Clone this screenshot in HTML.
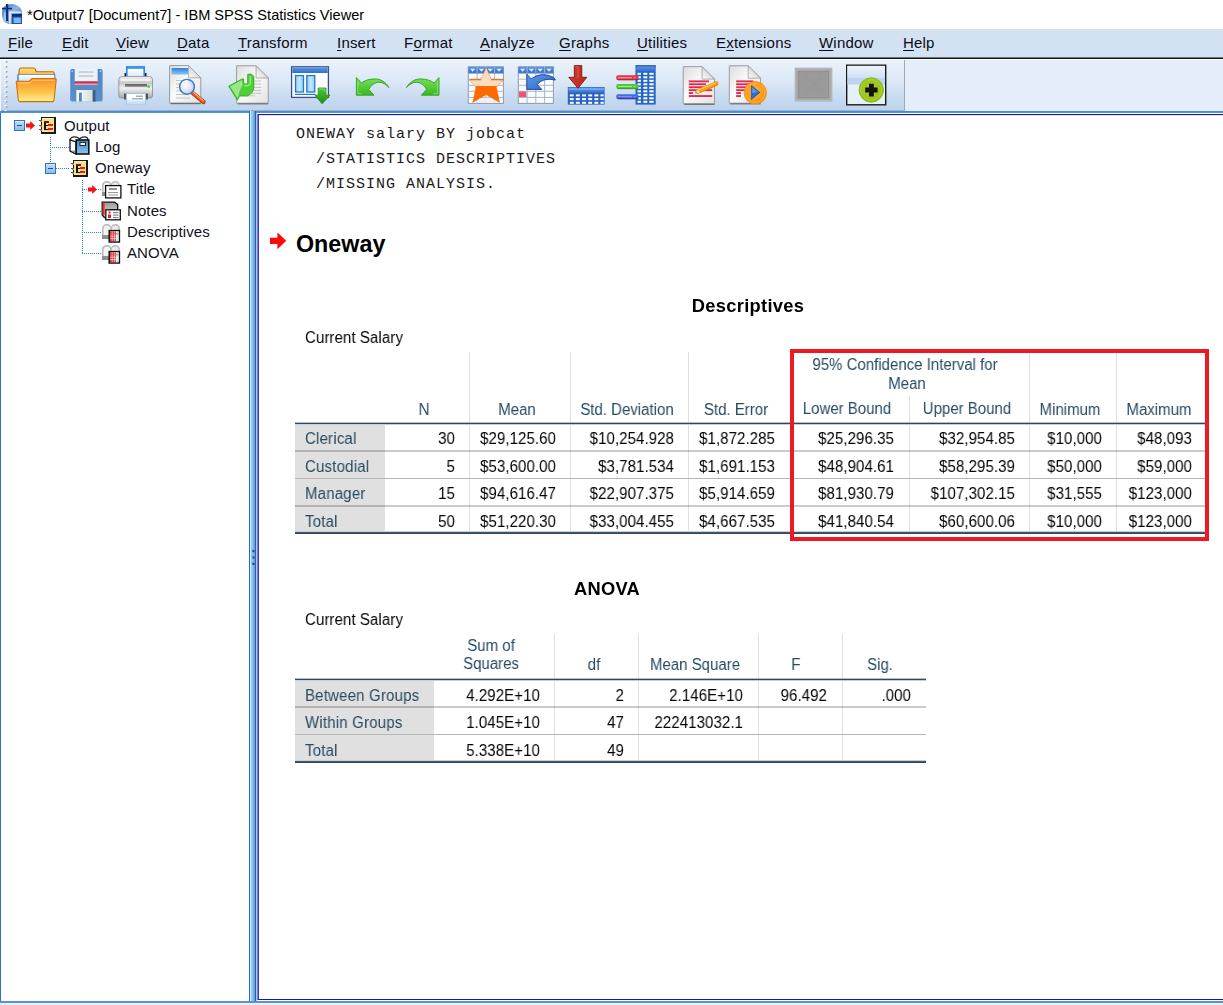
<!DOCTYPE html>
<html>
<head>
<meta charset="utf-8">
<title>Output7 - IBM SPSS Statistics Viewer</title>
<style>
*{box-sizing:border-box;margin:0;padding:0}
html,body{width:1223px;height:1005px;overflow:hidden;background:#fff}
body{position:relative;font-family:"Liberation Sans",sans-serif;color:#000}
.abs{position:absolute}
.ttl,.cap,.h,.l,.d{will-change:transform}
/* title bar */
#titlebar{left:0;top:0;width:1223px;height:29px;background:#fff}
#titletext{left:27px;top:6px;font-size:14.6px;line-height:18px;white-space:nowrap;color:#000}
/* menu */
#menubar{left:0;top:29px;width:1223px;height:28px;background:#d3e2f3}
#menuline{left:0;top:57px;width:1223px;height:3px;background:linear-gradient(#66717d 0,#66717d 1px,#121416 1px,#121416 2px,#fbfdff 2px,#fbfdff 3px)}
.mi{top:34px;font-size:15px;line-height:18px;white-space:nowrap;color:#0a0a14;letter-spacing:.2px}
.mi u{text-decoration:underline;text-underline-offset:2px}
/* toolbar */
#toolbar{left:0;top:60px;width:905px;height:51px;background:linear-gradient(#eaf2fb 0%,#dde9f7 40%,#c7daf0 75%,#bdd3ec 100%)}
#toolbar2{left:905px;top:60px;width:318px;height:51px;background:#e4eefa}
#tbsep{left:904px;top:60px;width:1px;height:51px;background:#a2a9b1}
#tbbot{left:0;top:110px;width:905px;height:1px;background:#9fb0c4}
#tbbot2{left:0;top:111px;width:1223px;height:2px;background:linear-gradient(#4489cf,#5596d6)}
/* panes */
#leftpane{left:0;top:113px;width:249px;height:888px;background:#fff;border-left:1px solid #2a74c4}
#split{left:249px;top:111px;width:7px;height:891px;background:linear-gradient(90deg,#1e6fbe 0,#1e6fbe 1px,#c4f0fb 1px,#c4f0fb 2px,#9dcbf9 2px,#8fc0f3 4px,#6f9fc8 5px,#6f9fc8 6px,#1768b8 6px,#1768b8 7px)}
#rightpane{left:256px;top:113px;width:967px;height:888px;background:#fff;border-left:1px solid #a8c8ee}
#rp-in{left:257px;top:114px;width:966px;height:886px;border:1px solid #1a10b8;border-right:none;border-left:2px solid #3f39c9;background:#fff}
#rp-fade{left:259px;top:115px;width:964px;height:1px;background:#e6e3f8}
#rp-l{left:257px;top:114px;width:1px;height:886px;background:#7c79da}
#botline{left:0;top:1001px;width:1223px;height:2px;background:#5594d3}
#botline2{left:0;top:1003px;width:1223px;height:2px;background:linear-gradient(#f4f8fd,#dde8f4)}
/* tree */
.tt{font-size:15px;line-height:18px;white-space:nowrap;color:#10101c;letter-spacing:.1px}
/* content */
.syn{font-family:"Liberation Mono",monospace;font-size:15px;letter-spacing:1px;line-height:20px;white-space:pre;color:#1a1a1a;left:296px}
#h1{left:296px;top:230px;font-size:23.3px;font-weight:bold;line-height:28px;white-space:nowrap}
.ttl{font-weight:bold;font-size:18.3px;line-height:22px;white-space:nowrap;text-align:center;letter-spacing:.3px}
.cap{font-size:16px;line-height:18px;white-space:nowrap;color:#010205;letter-spacing:.1px;transform:scaleX(.9375);transform-origin:0 50%}
.h{font-size:16px;line-height:18px;white-space:nowrap;color:#264a60;text-align:center;letter-spacing:0;transform:scaleX(.9375);transform-origin:50% 50%}
.l{font-size:16px;line-height:18px;white-space:nowrap;color:#264a60;letter-spacing:.2px;transform:scaleX(.9375);transform-origin:0 50%}
.d{font-size:16px;line-height:18px;white-space:nowrap;color:#010205;text-align:right;letter-spacing:.1px;transform:scaleX(.9375);transform-origin:100% 50%}
.vl{width:1px;background:#e0e0e0}
.hl{height:1px;background:#b6b6b6}
.hl2{height:2px;background:#cbcbcb;mix-blend-mode:multiply}
.dk{height:3px;background:linear-gradient(#b4bec6 0,#b4bec6 1px,#33475a 1px,#33475a 2px,#c9ced2 2px,#c9ced2 3px)}
.dk2{height:3px;background:linear-gradient(#c9ced2 0,#c9ced2 1px,#44586a 1px,#44586a 2px,#33475a 2px,#33475a 3px)}
.lb{background:#e0e0e0}
</style>
</head>
<body>
<!-- TITLE BAR -->
<div id="titlebar" class="abs"></div>
<svg class="abs" style="left:1px;top:3px" width="22" height="22" viewBox="0 0 22 22">
<defs><linearGradient id="ai1" x1="0" y1="0" x2="1" y2="1"><stop offset="0" stop-color="#3f74bc"/><stop offset=".45" stop-color="#8fb6e2"/><stop offset="1" stop-color="#356fc0"/></linearGradient></defs>
<path d="M1 9C1 4 5 1 10.5 1S21 4.5 21 10V21H9C4 21 1 17 1 12z" fill="url(#ai1)"/>
<path d="M8 8.5H20V10H9.8V20.5H8z" fill="#eef5fc" opacity=".85"/><path d="M4 9.5V18" stroke="#dbe8f6" stroke-width="1" opacity=".7"/>
<rect x="5" y="1" width="2.2" height="17" fill="#0d2f86"/>
<rect x="1" y="4.8" width="10" height="1.6" fill="#0d2f86"/>
<rect x="11" y="11" width="10" height="10" fill="#1f55b0"/>
<rect x="11" y="11" width="10" height="2.6" fill="#0b2e8a"/>
<rect x="12.6" y="14.6" width="7.2" height="5.4" fill="#7db8f2"/>
</svg>
<div id="titletext" class="abs">*Output7 [Document7] - IBM SPSS Statistics Viewer</div>
<!-- MENU -->
<div id="menubar" class="abs"></div>
<div id="menuline" class="abs"></div>
<div class="abs mi" style="left:8px"><u>F</u>ile</div>
<div class="abs mi" style="left:62px"><u>E</u>dit</div>
<div class="abs mi" style="left:116px"><u>V</u>iew</div>
<div class="abs mi" style="left:177px"><u>D</u>ata</div>
<div class="abs mi" style="left:238px"><u>T</u>ransform</div>
<div class="abs mi" style="left:337px"><u>I</u>nsert</div>
<div class="abs mi" style="left:404px">F<u>o</u>rmat</div>
<div class="abs mi" style="left:480px"><u>A</u>nalyze</div>
<div class="abs mi" style="left:559px"><u>G</u>raphs</div>
<div class="abs mi" style="left:637px"><u>U</u>tilities</div>
<div class="abs mi" style="left:716px">E<u>x</u>tensions</div>
<div class="abs mi" style="left:819px"><u>W</u>indow</div>
<div class="abs mi" style="left:903px"><u>H</u>elp</div>
<!-- TOOLBAR -->
<div id="toolbar" class="abs"></div>
<div id="toolbar2" class="abs"></div>
<div id="tbsep" class="abs"></div>
<div id="tbbot" class="abs"></div>
<div id="tbbot2" class="abs"></div>
<svg class="abs" style="left:0;top:59px" width="1223" height="52" viewBox="0 59 1223 52">
<defs>
<linearGradient id="gFoldB" x1="0" y1="0" x2="0" y2="1"><stop offset="0" stop-color="#ffe37a"/><stop offset="1" stop-color="#f6a11c"/></linearGradient>
<linearGradient id="gFoldF" x1="0" y1="0" x2="0" y2="1"><stop offset="0" stop-color="#f98f1a"/><stop offset=".35" stop-color="#ffad3d"/><stop offset=".6" stop-color="#ffc64a"/><stop offset="1" stop-color="#fff09a"/></linearGradient>
<linearGradient id="gPaperB" x1="0" y1="0" x2="0" y2="1"><stop offset="0" stop-color="#fff"/><stop offset="1" stop-color="#bfe2fa"/></linearGradient>
<linearGradient id="gFlop" x1="0" y1="0" x2="0" y2="1"><stop offset="0" stop-color="#4e88c6"/><stop offset="1" stop-color="#5a90c8"/></linearGradient>
<linearGradient id="gShut" x1="0" y1="0" x2="1" y2="0"><stop offset="0" stop-color="#fff"/><stop offset="1" stop-color="#cfd3d8"/></linearGradient>
<linearGradient id="gPrn" x1="0" y1="0" x2="0" y2="1"><stop offset="0" stop-color="#f3f3f3"/><stop offset=".3" stop-color="#c8c8c8"/><stop offset=".55" stop-color="#efefef"/><stop offset="1" stop-color="#a9a9a9"/></linearGradient>
<linearGradient id="gBlueHdr" x1="0" y1="0" x2="0" y2="1"><stop offset="0" stop-color="#2f80db"/><stop offset="1" stop-color="#86c8f5"/></linearGradient>
<linearGradient id="gDoc" x1="0" y1="0" x2="1" y2="1"><stop offset="0" stop-color="#dcdcdc"/><stop offset=".45" stop-color="#fbfbfb"/><stop offset="1" stop-color="#e2e2e2"/></linearGradient>
<linearGradient id="gFoldc" x1="0" y1="1" x2="1" y2="0"><stop offset="0" stop-color="#fdfdfd"/><stop offset="1" stop-color="#bdbdbd"/></linearGradient>
<radialGradient id="gLens" cx=".4" cy=".4" r=".7"><stop offset="0" stop-color="#fff"/><stop offset="1" stop-color="#c3c9ea"/></radialGradient>
<linearGradient id="gGreen" x1="0" y1="0" x2="0" y2="1"><stop offset="0" stop-color="#7be05a"/><stop offset="1" stop-color="#36b91f"/></linearGradient>
<linearGradient id="gGreenD" x1="0" y1="0" x2="0" y2="1"><stop offset="0" stop-color="#4ec43a"/><stop offset="1" stop-color="#1f8f12"/></linearGradient>
<linearGradient id="gPil" x1="0" y1="0" x2="1" y2="0"><stop offset="0" stop-color="#8fcdf2"/><stop offset=".5" stop-color="#c5e8fa"/><stop offset="1" stop-color="#8fcdf2"/></linearGradient>
<linearGradient id="gTblHdr" x1="0" y1="0" x2="0" y2="1"><stop offset="0" stop-color="#5b95e0"/><stop offset="1" stop-color="#2f6fd0"/></linearGradient>
<linearGradient id="gBArrow" x1="0" y1="0" x2="1" y2="1"><stop offset="0" stop-color="#5a9cec"/><stop offset="1" stop-color="#2a64c0"/></linearGradient>
<linearGradient id="gRed" x1="0" y1="0" x2="1" y2="0"><stop offset="0" stop-color="#d43a2c"/><stop offset="1" stop-color="#b8261c"/></linearGradient>
<radialGradient id="gOrb" cx=".45" cy=".45" r=".6"><stop offset="0" stop-color="#ffb440"/><stop offset=".8" stop-color="#ff9414"/><stop offset="1" stop-color="#f08a10"/></radialGradient>
<radialGradient id="gPlus" cx=".5" cy=".45" r=".6"><stop offset="0" stop-color="#a6cc2a"/><stop offset=".75" stop-color="#9cc41c"/><stop offset="1" stop-color="#7fb010"/></radialGradient>
</defs>
<rect x="4.6" y="60" width="2" height="2" fill="#fff"/><rect x="5.7" y="60.9" width="1.7" height="1.7" fill="#93a1b3"/>
<rect x="4.6" y="65" width="2" height="2" fill="#fff"/><rect x="5.7" y="65.9" width="1.7" height="1.7" fill="#93a1b3"/>
<rect x="4.6" y="70" width="2" height="2" fill="#fff"/><rect x="5.7" y="70.9" width="1.7" height="1.7" fill="#93a1b3"/>
<rect x="4.6" y="75" width="2" height="2" fill="#fff"/><rect x="5.7" y="75.9" width="1.7" height="1.7" fill="#93a1b3"/>
<rect x="4.6" y="80" width="2" height="2" fill="#fff"/><rect x="5.7" y="80.9" width="1.7" height="1.7" fill="#93a1b3"/>
<rect x="4.6" y="85" width="2" height="2" fill="#fff"/><rect x="5.7" y="85.9" width="1.7" height="1.7" fill="#93a1b3"/>
<rect x="4.6" y="90" width="2" height="2" fill="#fff"/><rect x="5.7" y="90.9" width="1.7" height="1.7" fill="#93a1b3"/>
<rect x="4.6" y="95" width="2" height="2" fill="#fff"/><rect x="5.7" y="95.9" width="1.7" height="1.7" fill="#93a1b3"/>
<rect x="4.6" y="100" width="2" height="2" fill="#fff"/><rect x="5.7" y="100.9" width="1.7" height="1.7" fill="#93a1b3"/>
<rect x="4.6" y="105" width="2" height="2" fill="#fff"/><rect x="5.7" y="105.9" width="1.7" height="1.7" fill="#93a1b3"/>
<rect x="4.6" y="110" width="2" height="2" fill="#fff"/><rect x="5.7" y="110.9" width="1.7" height="1.7" fill="#93a1b3"/>
<rect x="0" y="59" width="1" height="52" fill="#f4f8fd"/>
<g>
<path d="M18.7 76 L19.3 69.5 Q19.6 68 21 68 H33.5 Q34.8 68 35.3 69.2 L36.2 71.7 H52.8 Q54.2 71.7 54.2 73 V80 H18.7z" fill="url(#gFoldB)" stroke="#c2650f" stroke-width="1.1"/>
<path d="M17.3 74.4 H55.3 V82 H17.3z" fill="#2b6fe0"/>
<path d="M18.6 75 H54.3 V82 H18.6z" fill="url(#gPaperB)"/>
<path d="M16.6 81.2 H29.5 L32 78.6 H55 Q56.4 78.6 56.2 80 L54 100.2 Q53.8 101.6 52.4 101.6 H20 Q18.6 101.6 18.4 100.2 L16.3 82.4 Q16.2 81.2 16.6 81.2z" fill="url(#gFoldF)" stroke="#d0700f" stroke-width="1.1"/>
<path d="M18 83 H30 L32.5 80.2 H54.6" fill="none" stroke="#ffd9a0" stroke-width="1" opacity=".8"/>
</g>
<g>
<path d="M72.2 69 H100.6 Q102.6 69 102.6 71 V99.6 Q102.6 101.6 100.6 101.6 H72.2 Q70.2 101.6 70.2 99.6 V71 Q70.2 69 72.2 69z" fill="url(#gFlop)"/>
<rect x="74.7" y="68.8" width="22.9" height="13" fill="#eef3fa"/>
<rect x="78.5" y="71.4" width="15" height="1.3" fill="#b9c0c9"/>
<rect x="78.5" y="75.4" width="15" height="1.3" fill="#b9c0c9"/>
<rect x="74.7" y="81.3" width="22.9" height="2.2" fill="#d9284a"/>
<rect x="74.7" y="83.5" width="22.9" height="1.6" fill="#f09aa8"/>
<rect x="76.4" y="90" width="19.4" height="11.6" fill="url(#gShut)"/>
<rect x="79" y="92.6" width="2.8" height="9" fill="#4e88c6"/>
<rect x="92.6" y="90" width="3.2" height="11.6" fill="#3a5f8c"/>
<rect x="71.5" y="70.5" width="1.6" height="1.6" fill="#c8dcf0" opacity=".8"/><rect x="99.6" y="70.5" width="1.6" height="1.6" fill="#c8dcf0" opacity=".8"/>
</g>
<g>
<rect x="124.5" y="73" width="22" height="5" fill="#222"/>
<rect x="126" y="66.1" width="19" height="13.5" fill="#2f86e0"/>
<rect x="127.6" y="69" width="15.8" height="11" fill="url(#gPaperB)"/>
<rect x="127.6" y="67.4" width="15.8" height="1.6" fill="#5aa6ee"/>
<path d="M122 76.6 H149.5 Q152.5 76.6 152.5 79.6 V95.5 Q152.5 98 150 98 H121.3 Q118.8 98 118.8 95.5 V79.6 Q118.8 76.6 122 76.6z" fill="url(#gPrn)" stroke="#8a8a8a" stroke-width=".8"/>
<rect x="121" y="79" width="29.5" height="2" fill="#f7f7f7" opacity=".8"/>
<rect x="125" y="84" width="22" height="2.6" fill="#6e6e6e"/>
<rect x="147.4" y="85.3" width="2.4" height="2.4" fill="#3fd04a"/>
<rect x="124" y="93.5" width="24" height="6" fill="#555"/>
<rect x="126.4" y="93.5" width="19" height="10.4" fill="#fff" stroke="#9cc4ea" stroke-width="1"/>
<rect x="126.9" y="100.5" width="18" height="3" fill="#cfe4f7"/>
<rect x="136" y="95.6" width="7" height="1.2" fill="#8d99a8"/>
<rect x="132" y="98.2" width="11" height="1.2" fill="#8d99a8"/>
</g>
<g><path d="M169.6 65.6 H188.60000000000002 L200.8 77.8 V103 H169.6z" fill="url(#gDoc)" stroke="#9b9b9b" stroke-width="1"/><path d="M188.60000000000002 65.6 L200.8 77.8 H188.60000000000002z" fill="url(#gFoldc)" stroke="#9a9a9a" stroke-width=".8"/><path d="M170.6 103.6 H200.8" stroke="#6f6f6f" stroke-width="1.2"/>
<rect x="171.6" y="68" width="16.4" height="6.6" fill="url(#gBlueHdr)"/>
<g stroke="#c4c4c4" stroke-width="1"><path d="M176 80.5h10M176 84h8M176 87.5h8M176 91h8M176 94.5h10M176 98h14"/></g>
<path d="M192.8 93.2 L203.6 102" stroke="#b33a16" stroke-width="4.2" stroke-linecap="round"/>
<path d="M193.2 93 L203.4 101.4" stroke="#f0642c" stroke-width="2.6" stroke-linecap="round"/>
<path d="M193.6 92.4 L203 100.2" stroke="#ffc9a0" stroke-width=".9" stroke-linecap="round"/>
<circle cx="187" cy="86.8" r="7.4" fill="url(#gLens)" stroke="#3b7dc7" stroke-width="1.5"/>
<path d="M182 84.5 A5.4 5.4 0 0 1 188 81.2" stroke="#fff" stroke-width="1.6" fill="none" opacity=".9"/>
</g>
<g><path d="M236.6 65.8 H256.1 L268.3 78.0 V103.2 H236.6z" fill="url(#gDoc)" stroke="#9b9b9b" stroke-width="1"/><path d="M256.1 65.8 L268.3 78.0 H256.1z" fill="url(#gFoldc)" stroke="#9a9a9a" stroke-width=".8"/><path d="M237.6 103.8 H268.3" stroke="#6f6f6f" stroke-width="1.2"/>
<g stroke="#c2c2c2" stroke-width="1"><path d="M250 81h11M250 84h11M250 87.4h11M250 90.4h11M250 93.3h11M246 95.8h9"/></g>
<path d="M247.7 74.3 L251 74.1 L253.8 76.3 L253.8 87 Q253.5 93.4 247.3 96 L239.4 96 L237.4 100.2 L228.7 86.2 L241.9 79 L243.7 79 L243.7 83.2 Q245.6 85 247.7 83.2z" fill="#4fcf3a" stroke="#2eaa22" stroke-width=".9" stroke-linejoin="round"/>
<path d="M230.2 86.4 L241.6 80.2 L242.6 84.6 L240 90 L237.6 98.2z" fill="#a9ec98" opacity=".85"/>
<path d="M244.4 85.4 Q248 87 250.2 84 L250.2 76" fill="none" stroke="#b9f2a6" stroke-width="1.2" opacity=".8"/>
</g>
<g>
<rect x="291.6" y="66.8" width="36.8" height="30.6" fill="#fff" stroke="#3d4f86" stroke-width="1.3"/>
<rect x="292.3" y="67.4" width="35.4" height="5.6" fill="url(#gTblHdr)"/>
<rect x="295.5" y="75.6" width="8" height="16.4" fill="url(#gPil)" stroke="#1f78d8" stroke-width="1.3"/>
<rect x="306.8" y="75.6" width="8" height="16.4" fill="url(#gPil)" stroke="#1f78d8" stroke-width="1.3"/>
<rect x="295" y="93.8" width="20.4" height="1.2" fill="#1f78d8"/>
<path d="M318.2 88 H326 V95.2 H330 L322.1 103.8 L314.9 95.2 H318.2z" fill="url(#gGreenD)" stroke="#1d8a12" stroke-width=".8"/>
<path d="M319.3 89 H324.8 V92" fill="none" stroke="#8fe07a" stroke-width="1" opacity=".9"/>
</g>
<g transform="translate(356.2 77.6)"><path d="M0.2 0 L0.2 17.6 L17.8 17.6 L12.6 11.8 C14.5 7.8 19 4.6 23 4.6 C27 4.6 30 7.2 32.8 9.9 C29.5 4.6 24.5 1.3 19 1.3 C13 1.3 8 3 5.2 5.4z" fill="url(#gGreen)" stroke="#2f9e1e" stroke-width=".9" stroke-linejoin="round"/><path d="M1.6 4 L1.6 16.2 L6 16.2" fill="none" stroke="#9cec80" stroke-width="1" opacity=".7"/></g>
<g transform="translate(439.2 77.6) scale(-1 1)"><path d="M0.2 0 L0.2 17.6 L17.8 17.6 L12.6 11.8 C14.5 7.8 19 4.6 23 4.6 C27 4.6 30 7.2 32.8 9.9 C29.5 4.6 24.5 1.3 19 1.3 C13 1.3 8 3 5.2 5.4z" fill="url(#gGreen)" stroke="#2f9e1e" stroke-width=".9" stroke-linejoin="round"/><path d="M1.6 4 L1.6 16.2 L6 16.2" fill="none" stroke="#9cec80" stroke-width="1" opacity=".7"/></g>
<g><rect x="468.3" y="66.8" width="35.099999999999966" height="36.60000000000001" fill="#fbfcfe" stroke="#8a9ab0" stroke-width="1"/><rect x="468.3" y="66.8" width="35.099999999999966" height="6.4" fill="url(#gTblHdr)"/><path d="M470.0875 68.8 h5.2 l-2.6 3z" fill="#fff" opacity=".85"/><path d="M478.86249999999995 68.8 h5.2 l-2.6 3z" fill="#fff" opacity=".85"/><path d="M487.6375 68.8 h5.2 l-2.6 3z" fill="#fff" opacity=".85"/><path d="M496.41249999999997 68.8 h5.2 l-2.6 3z" fill="#fff" opacity=".85"/><path d="M477.1 66.8V103.4M485.9 66.8V103.4M494.6 66.8V103.4M468.3 79.2H503.4M468.3 85.3H503.4M468.3 91.3H503.4M468.3 97.4H503.4" stroke="#a9b5c6" stroke-width="1" fill="none"/><path d="M468.3 73.2H503.4" stroke="#6f8fc0" stroke-width=".8"/>
<clipPath id="cpTop"><rect x="460" y="60" width="50" height="26"/></clipPath>
<clipPath id="cpBot"><rect x="460" y="86" width="50" height="26"/></clipPath>
<path d="M486.2 67.8 L491.1 79.0 L503.6 79.9 L496.5 87.1 L499.6 102.5 L486.2 94.7 L472.7 102.5 L475.9 87.1 L469.4 79.9 L481.2 79.0z" fill="#fcdcbf" clip-path="url(#cpTop)"/>
<path d="M486.2 67.8 L491.1 79.0 L503.6 79.9 L496.5 87.1 L499.6 102.5 L486.2 94.7 L472.7 102.5 L475.9 87.1 L469.4 79.9 L481.2 79.0z" fill="#ff6a00" clip-path="url(#cpBot)"/>
<path d="M469.6 79.6 H481.2 M491.1 79.6 H503.4" stroke="#d9701c" stroke-width="1.1"/>
<path d="M486.2 67.8 L491.1 79.0 L503.6 79.9 L496.5 87.1 L499.6 102.5 L486.2 94.7 L472.7 102.5 L475.9 87.1 L469.4 79.9 L481.2 79.0z" fill="none" stroke="#e8803a" stroke-width=".9" stroke-dasharray="1.4 1"/>
<path d="M475.4 102.6 Q486.2 93 497 102.6z" fill="#f1f1f1"/>
</g>
<g><rect x="518.3" y="66.8" width="35.10000000000002" height="36.60000000000001" fill="#fbfcfe" stroke="#8a9ab0" stroke-width="1"/><rect x="518.3" y="66.8" width="35.10000000000002" height="6.4" fill="url(#gTblHdr)"/><path d="M520.0875 68.8 h5.2 l-2.6 3z" fill="#fff" opacity=".85"/><path d="M528.8625 68.8 h5.2 l-2.6 3z" fill="#fff" opacity=".85"/><path d="M537.6374999999999 68.8 h5.2 l-2.6 3z" fill="#fff" opacity=".85"/><path d="M546.4124999999999 68.8 h5.2 l-2.6 3z" fill="#fff" opacity=".85"/><path d="M527.1 66.8V103.4M535.8 66.8V103.4M544.6 66.8V103.4M518.3 79.2H553.4M518.3 85.3H553.4M518.3 91.3H553.4M518.3 97.4H553.4" stroke="#a9b5c6" stroke-width="1" fill="none"/><path d="M518.3 73.2H553.4" stroke="#6f8fc0" stroke-width=".8"/>
<rect x="519" y="91.6" width="7.4" height="5.4" fill="#f0536b"/>
<path d="M526.8 74.2 L526.8 89.4 L541.8 89.4 L537.2 84.6 Q543 77.2 555.4 80 L553.8 77.6 Q542 71 531.2 78.8z" fill="url(#gBArrow)" stroke="#1c3f96" stroke-width=".9" stroke-linejoin="round"/>
</g>
<g>
<rect x="567.8" y="87" width="36.8" height="17.6" fill="#2a62c4"/>
<rect x="568.6" y="87.8" width="35.2" height="5" fill="url(#gTblHdr)"/>
<rect x="568.6" y="87.8" width="35.2" height="2.4" fill="#6aa6ee"/>
<rect x="569.8" y="94.4" width="3.9" height="2" fill="#fff"/><rect x="569.8" y="98.1" width="3.9" height="2" fill="#fff"/><rect x="569.8" y="101.8" width="3.9" height="2" fill="#fff"/><rect x="575.9" y="94.4" width="3.9" height="2" fill="#fff"/><rect x="575.9" y="98.1" width="3.9" height="2" fill="#fff"/><rect x="575.9" y="101.8" width="3.9" height="2" fill="#fff"/><rect x="582.1" y="94.4" width="3.9" height="2" fill="#fff"/><rect x="582.1" y="98.1" width="3.9" height="2" fill="#fff"/><rect x="582.1" y="101.8" width="3.9" height="2" fill="#fff"/><rect x="588.2" y="94.4" width="3.9" height="2" fill="#fff"/><rect x="588.2" y="98.1" width="3.9" height="2" fill="#fff"/><rect x="588.2" y="101.8" width="3.9" height="2" fill="#fff"/><rect x="594.4" y="94.4" width="3.9" height="2" fill="#fff"/><rect x="594.4" y="98.1" width="3.9" height="2" fill="#fff"/><rect x="594.4" y="101.8" width="3.9" height="2" fill="#fff"/><rect x="600.5" y="94.4" width="3.2" height="2" fill="#fff"/><rect x="600.5" y="98.1" width="3.2" height="2" fill="#fff"/><rect x="600.5" y="101.8" width="3.2" height="2" fill="#fff"/>
<path d="M574.3 65.6 H581.8 V77.3 H586.8 L578 88.3 L568.8 77.3 H574.3z" fill="url(#gRed)" stroke="#7e1a10" stroke-width=".9" stroke-linejoin="round"/>
<path d="M575.4 66.6 H578 V78" fill="none" stroke="#ec6a58" stroke-width="1" opacity=".8"/>
</g>
<g>
<rect x="635.5" y="65.4" width="20.2" height="39.2" fill="#2466c8"/>
<rect x="635.5" y="65.4" width="20.2" height="1" fill="#1a4a9c"/>
<rect x="636.3" y="66.4" width="18.6" height="5" fill="url(#gTblHdr)"/>
<rect x="637.5" y="72.8" width="3.4" height="2" fill="#fff"/><rect x="637.5" y="76.3" width="3.4" height="2" fill="#fff"/><rect x="637.5" y="79.8" width="3.4" height="2" fill="#fff"/><rect x="637.5" y="83.3" width="3.4" height="2" fill="#fff"/><rect x="637.5" y="86.8" width="3.4" height="2" fill="#fff"/><rect x="637.5" y="90.3" width="3.4" height="2" fill="#fff"/><rect x="637.5" y="93.8" width="3.4" height="2" fill="#fff"/><rect x="637.5" y="97.3" width="3.4" height="2" fill="#fff"/><rect x="637.5" y="100.8" width="3.4" height="2" fill="#fff"/><rect x="643.4" y="72.8" width="3.9" height="2" fill="#fff"/><rect x="643.4" y="76.3" width="3.9" height="2" fill="#fff"/><rect x="643.4" y="79.8" width="3.9" height="2" fill="#fff"/><rect x="643.4" y="83.3" width="3.9" height="2" fill="#fff"/><rect x="643.4" y="86.8" width="3.9" height="2" fill="#fff"/><rect x="643.4" y="90.3" width="3.9" height="2" fill="#fff"/><rect x="643.4" y="93.8" width="3.9" height="2" fill="#fff"/><rect x="643.4" y="97.3" width="3.9" height="2" fill="#fff"/><rect x="643.4" y="100.8" width="3.9" height="2" fill="#fff"/><rect x="649.3" y="72.8" width="4.4" height="2" fill="#fff"/><rect x="649.3" y="76.3" width="4.4" height="2" fill="#fff"/><rect x="649.3" y="79.8" width="4.4" height="2" fill="#fff"/><rect x="649.3" y="83.3" width="4.4" height="2" fill="#fff"/><rect x="649.3" y="86.8" width="4.4" height="2" fill="#fff"/><rect x="649.3" y="90.3" width="4.4" height="2" fill="#fff"/><rect x="649.3" y="93.8" width="4.4" height="2" fill="#fff"/><rect x="649.3" y="97.3" width="4.4" height="2" fill="#fff"/><rect x="649.3" y="100.8" width="4.4" height="2" fill="#fff"/>
<rect x="616.3" y="75.3" width="22.2" height="4.8" rx="1.6" fill="#e0324e"/><rect x="617.5" y="78.89999999999999" width="21" height="1.6" rx=".8" fill="#9c1830" opacity=".6"/><rect x="618" y="77.3" width="14" height="1" fill="#ffb89a"/><rect x="633.5" y="77.3" width="2" height="1" fill="#ffb89a"/>
<rect x="616.3" y="84.1" width="22.2" height="4.8" rx="1.6" fill="#4ecb3c"/><rect x="617.5" y="87.69999999999999" width="21" height="1.6" rx=".8" fill="#2a8a20" opacity=".6"/><rect x="618" y="86.1" width="14" height="1" fill="#b4f090"/><rect x="633.5" y="86.1" width="2" height="1" fill="#b4f090"/>
<rect x="616.3" y="94.2" width="22.2" height="4.8" rx="1.6" fill="#3a6fe0"/><rect x="617.5" y="97.8" width="21" height="1.6" rx=".8" fill="#2a2a9c" opacity=".6"/><rect x="618" y="96.2" width="14" height="1" fill="#a890f0"/><rect x="633.5" y="96.2" width="2" height="1" fill="#a890f0"/>
</g>
<g><path d="M683.2 66.7 H702.1 L714.5 79.10000000000001 V103.7 H683.2z" fill="url(#gDoc)" stroke="#9b9b9b" stroke-width="1"/><path d="M702.1 66.7 L714.5 79.10000000000001 H702.1z" fill="url(#gFoldc)" stroke="#9a9a9a" stroke-width=".8"/><path d="M684.2 104.3 H714.5" stroke="#6f6f6f" stroke-width="1.2"/><rect x="688.8" y="80.4" width="20.2" height="1.9" fill="#e22a4c"/><rect x="688.8" y="83.3" width="17.2" height="1.9" fill="#e22a4c"/><rect x="688.8" y="86.3" width="23.4" height="1.9" fill="#e22a4c"/><rect x="688.8" y="89.2" width="23.4" height="1.9" fill="#e22a4c"/><rect x="688.8" y="92.1" width="4.2" height="1.9" fill="#e22a4c"/><rect x="688.8" y="95.1" width="23.4" height="1.9" fill="#e22a4c"/>
<path d="M697.6 91.6 L716.2 83.6" stroke="#e8860c" stroke-width="4.6" stroke-linecap="round"/>
<path d="M697.8 91 L716 83.2" stroke="#ffa41a" stroke-width="3" stroke-linecap="round"/>
<path d="M698 90.2 L715.6 82.6" stroke="#ffd27a" stroke-width="1" stroke-linecap="round" stroke-dasharray="1.4 1"/>
<path d="M694.8 93.4 L698.4 89.2 L700 92.8z" fill="#f0d8b0"/>
<path d="M694.6 93.5 L696.2 91.8 L696.8 93z" fill="#777"/>
</g>
<g><path d="M729.3 65.8 H748.2 L760.6 78.2 V103.2 H729.3z" fill="url(#gDoc)" stroke="#9b9b9b" stroke-width="1"/><path d="M748.2 65.8 L760.6 78.2 H748.2z" fill="url(#gFoldc)" stroke="#9a9a9a" stroke-width=".8"/><path d="M730.3 103.8 H760.6" stroke="#6f6f6f" stroke-width="1.2"/><rect x="736.2" y="80.4" width="17.2" height="1.9" fill="#e22a4c"/><rect x="736.2" y="83.3" width="17.2" height="1.9" fill="#e22a4c"/><rect x="736.2" y="86.3" width="17.2" height="1.9" fill="#e22a4c"/><rect x="736.2" y="89.2" width="17.2" height="1.9" fill="#e22a4c"/><rect x="736.2" y="92.1" width="4.8" height="1.9" fill="#e22a4c"/><rect x="736.2" y="95.1" width="4.8" height="1.9" fill="#e22a4c"/>
<circle cx="755.3" cy="92.8" r="11.2" fill="url(#gOrb)" stroke="#f2920f" stroke-width=".8"/>
<circle cx="755.3" cy="92.8" r="9.6" fill="none" stroke="#ffb855" stroke-width="1" opacity=".7"/>
<path d="M751.4 85.6 V99.4 L759.9 92.4z" fill="#2a6fd4" stroke="#1d4fa0" stroke-width=".7" stroke-linejoin="round"/>
<path d="M752.4 87.6 V93 L757.6 92z" fill="#6aa8f0" opacity=".8"/>
</g>
<g>
<rect x="794.7" y="67.7" width="37.6" height="33.8" fill="#a9a9a9"/>
<rect x="795.7" y="68.7" width="35.6" height="31.8" fill="none" stroke="#b9b9b9" stroke-width="1"/>
<rect x="798.4" y="71.6" width="30.2" height="26.2" fill="#9a9a9a" stroke="#8f8f8f" stroke-width="1"/>
<path d="M806 77 L813.5 84 L821 77 M806 92 L813.5 85.4 L821 92" stroke="#949494" stroke-width="2.4" fill="none" opacity=".35"/>
</g>
<g>
<rect x="846.7" y="65.2" width="39" height="39.6" fill="#e6f0fb" stroke="#1a1a1a" stroke-width="1.4"/>
<rect x="847.4" y="65.9" width="37.6" height="12" fill="url(#gSelTop)"/>
<rect x="847.4" y="77.9" width="37.6" height="6.6" fill="#bcd6f2"/>
<circle cx="871.3" cy="90" r="12.2" fill="url(#gPlus)" stroke="#8cbc20" stroke-width="1"/>
<circle cx="871.3" cy="90" r="10.4" fill="none" stroke="#b6d84a" stroke-width=".8" opacity=".8"/>
<path d="M869 83.8 H873.8 V87.6 H877.6 V92.6 H873.8 V96.4 H869 V92.6 H865.2 V87.6 H869z" fill="#121212"/>
</g>
<defs><linearGradient id="gSelTop" x1="0" y1="0" x2="0" y2="1"><stop offset="0" stop-color="#eef4fc"/><stop offset="1" stop-color="#cfe0f5"/></linearGradient></defs>
</svg>
<!-- PANES -->
<div id="leftpane" class="abs"></div>
<div id="rightpane" class="abs"></div>
<div id="rp-in" class="abs"></div>
<div id="rp-l" class="abs"></div>
<div id="rp-fade" class="abs"></div>
<div id="split" class="abs"></div>
<svg class="abs" style="left:250px;top:547px" width="6" height="20" viewBox="0 0 6 20"><g fill="#2a3f8c"><rect x="2.4" y="3" width="2" height="2.2"/><rect x="2.4" y="9.4" width="2" height="2.2"/><rect x="2.4" y="15.8" width="2" height="2.2"/></g><g fill="#7fa9e6" opacity=".8"><rect x="1.2" y="2" width="1.4" height="1.6"/><rect x="1.2" y="8.4" width="1.4" height="1.6"/><rect x="1.2" y="14.8" width="1.4" height="1.6"/></g></svg>
<div id="botline" class="abs"></div>
<div id="botline2" class="abs"></div>
<svg class="abs" style="left:14px;top:120px" width="11" height="11" viewBox="0 0 11 11" shape-rendering="crispEdges"><defs><linearGradient id="mg14" x1="0" y1="0" x2="0" y2="1"><stop offset="0" stop-color="#c4dcf6"/><stop offset="1" stop-color="#8dbbe9"/></linearGradient></defs><rect x=".5" y=".5" width="10" height="10" fill="url(#mg14)" stroke="#2f74c0"/><rect x="1" y="1" width="9" height="1" fill="#dbeafa"/><rect x="3" y="5" width="5" height="1" fill="#1d4f9a"/></svg>
<svg class="abs" style="left:26px;top:121px" width="9" height="9" viewBox="0 0 9 9"><path d="M0 2.5h4.2V0L9 4.5 4.2 9V6.5H0z" fill="#f4131b"/></svg>
<svg class="abs" style="left:39px;top:116px" width="18" height="19" viewBox="0 0 18 19" shape-rendering="crispEdges">
<rect x="2" y="1" width="15" height="17" fill="#1a1a1a"/>
<rect x="3" y="2" width="12" height="14" fill="#fbe08c"/>
<rect x="3" y="2" width="12" height="1" fill="#fdeeb8"/>
<rect x="0" y="4" width="3" height="1" fill="#555"/><rect x="0" y="9" width="3" height="1" fill="#555"/><rect x="0" y="13" width="3" height="1" fill="#555"/>
<rect x="1" y="5" width="2" height="1" fill="#aaa"/><rect x="1" y="10" width="2" height="1" fill="#aaa"/><rect x="1" y="14" width="2" height="1" fill="#aaa"/>
<rect x="5" y="5" width="2" height="9" fill="#111"/>
<rect x="5" y="5" width="5" height="2" fill="#6b1a10"/>
<rect x="5" y="9" width="4" height="1" fill="#111"/>
<rect x="5" y="13" width="4" height="1" fill="#111"/>
<rect x="9" y="8" width="5" height="2" fill="#ee1c1c"/>
<rect x="9" y="12" width="5" height="2" fill="#ee1c1c"/>
</svg>
<div class="abs tt" style="left:64px;top:117px">Output</div>
<div class="abs" style="left:50px;top:137px;width:1px;height:26px;background:repeating-linear-gradient(#2f7fdc 0,#2f7fdc 1px,transparent 1px,transparent 2px)"></div>
<div class="abs" style="left:50px;top:147px;width:19px;height:1px;background:repeating-linear-gradient(90deg,#2f7fdc 0,#2f7fdc 1px,transparent 1px,transparent 2px)"></div>
<svg class="abs" style="left:69px;top:136px" width="21" height="19" viewBox="0 0 21 19">
<defs><linearGradient id="lg1" x1="0" y1="0" x2="0" y2="1"><stop offset="0" stop-color="#3e86d2"/><stop offset="1" stop-color="#8fc3f0"/></linearGradient></defs>
<path d="M1 4.5C1 2 3 .8 5.5 .8S9.5 1.5 10.5 3.2C11.5 1.5 13.5 .8 15.5 .8S19 2 19 4" fill="#fff" stroke="#222" stroke-width="1.2"/>
<path d="M1 4v11l6 3V6z" fill="#fff" stroke="#111" stroke-width="1.3"/>
<path d="M1.5 14.5h5v2.5z" fill="#999"/>
<rect x="7.2" y="4" width="12.6" height="14" fill="url(#lg1)" stroke="#111" stroke-width="1.6"/>
<rect x="11" y="6.5" width="5.5" height="3" fill="#fff" stroke="#222" stroke-width="1"/>
</svg>
<div class="abs tt" style="left:95px;top:138px">Log</div>
<svg class="abs" style="left:45px;top:163px" width="11" height="11" viewBox="0 0 11 11" shape-rendering="crispEdges"><defs><linearGradient id="mg45" x1="0" y1="0" x2="0" y2="1"><stop offset="0" stop-color="#c4dcf6"/><stop offset="1" stop-color="#8dbbe9"/></linearGradient></defs><rect x=".5" y=".5" width="10" height="10" fill="url(#mg45)" stroke="#2f74c0"/><rect x="1" y="1" width="9" height="1" fill="#dbeafa"/><rect x="3" y="5" width="5" height="1" fill="#1d4f9a"/></svg>
<div class="abs" style="left:56px;top:168px;width:13px;height:1px;background:repeating-linear-gradient(90deg,#2f7fdc 0,#2f7fdc 1px,transparent 1px,transparent 2px)"></div>
<svg class="abs" style="left:71px;top:159px" width="18" height="19" viewBox="0 0 18 19" shape-rendering="crispEdges">
<rect x="2" y="1" width="15" height="17" fill="#1a1a1a"/>
<rect x="3" y="2" width="12" height="14" fill="#fbe08c"/>
<rect x="3" y="2" width="12" height="1" fill="#fdeeb8"/>
<rect x="0" y="4" width="3" height="1" fill="#555"/><rect x="0" y="9" width="3" height="1" fill="#555"/><rect x="0" y="13" width="3" height="1" fill="#555"/>
<rect x="1" y="5" width="2" height="1" fill="#aaa"/><rect x="1" y="10" width="2" height="1" fill="#aaa"/><rect x="1" y="14" width="2" height="1" fill="#aaa"/>
<rect x="5" y="5" width="2" height="9" fill="#111"/>
<rect x="5" y="5" width="5" height="2" fill="#6b1a10"/>
<rect x="5" y="9" width="4" height="1" fill="#111"/>
<rect x="5" y="13" width="4" height="1" fill="#111"/>
<rect x="9" y="8" width="5" height="2" fill="#ee1c1c"/>
<rect x="9" y="12" width="5" height="2" fill="#ee1c1c"/>
</svg>
<div class="abs tt" style="left:95px;top:159px">Oneway</div>
<div class="abs" style="left:82px;top:180px;width:1px;height:74px;background:repeating-linear-gradient(#2f7fdc 0,#2f7fdc 1px,transparent 1px,transparent 2px)"></div>
<div class="abs" style="left:82px;top:189px;width:19px;height:1px;background:repeating-linear-gradient(90deg,#2f7fdc 0,#2f7fdc 1px,transparent 1px,transparent 2px)"></div>
<svg class="abs" style="left:88px;top:185px" width="9" height="9" viewBox="0 0 9 9"><path d="M0 2.5h4.2V0L9 4.5 4.2 9V6.5H0z" fill="#f4131b"/></svg>
<svg class="abs" style="left:101px;top:180px" width="21" height="19" viewBox="0 0 21 19">
<path d="M1 6C1 2.5 3 1 6 1S9.5 2 10 4C10.5 2 12.5 1 14.5 1S19 2.5 19 6V15H1z" fill="#b9b9b9"/>
<path d="M2.5 6C2.5 3.5 4 2.5 6 2.5S9 3.5 9.3 5.5V14H2.5z" fill="#f4f4f4"/>
<path d="M10.7 5.5C11 3.5 12.5 2.5 14.5 2.5S17.5 3.5 17.5 6V14H10.7z" fill="#ececec"/>
<path d="M1 12h8v4H1z" fill="#8f8f8f"/>
<rect x="4.6" y="5.6" width="15.3" height="12.3" fill="#fff" stroke="#111" stroke-width="1.3"/>
<rect x="8" y="8" width="8" height="2" fill="#777" opacity=".8"/>
<rect x="7" y="12" width="10" height="1" fill="#999"/>
<rect x="7" y="14.5" width="10" height="1" fill="#999"/>
</svg>
<div class="abs tt" style="left:127px;top:180px">Title</div>
<div class="abs" style="left:82px;top:211px;width:19px;height:1px;background:repeating-linear-gradient(90deg,#2f7fdc 0,#2f7fdc 1px,transparent 1px,transparent 2px)"></div>
<svg class="abs" style="left:101px;top:201px" width="21" height="20" viewBox="0 0 21 20">
<defs><linearGradient id="ng1" x1="0" y1="0" x2="0" y2="1"><stop offset="0" stop-color="#999"/><stop offset="1" stop-color="#e6e6e6"/></linearGradient></defs>
<path d="M1.2 1.2h12.5l3 2.3V9h-9v7.5H3.5L1.2 14z" fill="url(#ng1)" stroke="#111" stroke-width="1.3"/>
<rect x="1.6" y="1.6" width="2" height="12.5" fill="#e53222"/>
<rect x="4.8" y="8.8" width="14.5" height="10" fill="#fff" stroke="#111" stroke-width="1.3"/>
<rect x="7.5" y="10.5" width="2" height="2" fill="#e02020"/>
<rect x="7" y="13.5" width="3" height="3.5" fill="#e02020"/>
<rect x="12" y="11" width="5.5" height="1.2" fill="#888"/>
<rect x="12" y="13.5" width="5.5" height="1.2" fill="#888"/>
<rect x="12" y="16" width="5.5" height="1.2" fill="#888"/>
</svg>
<div class="abs tt" style="left:127px;top:202px">Notes</div>
<div class="abs" style="left:82px;top:232px;width:19px;height:1px;background:repeating-linear-gradient(90deg,#2f7fdc 0,#2f7fdc 1px,transparent 1px,transparent 2px)"></div>
<svg class="abs" style="left:101px;top:223px" width="21" height="20" viewBox="0 0 21 20">
<path d="M1 6C1 2.5 3 1 6 1S9.5 2 10 4C10.5 2 12.5 1 14.5 1S19 2.5 19 6V15H1z" fill="#b9b9b9"/>
<path d="M2.5 6C2.5 3.5 4 2.5 6 2.5S9 3.5 9.3 5.5V14H2.5z" fill="#f4f4f4"/>
<path d="M10.7 5.5C11 3.5 12.5 2.5 14.5 2.5S17.5 3.5 17.5 6V14H10.7z" fill="#ececec"/>
<path d="M1 12h8v4H1z" fill="#8f8f8f"/>
<rect x="8.2" y="7.6" width="10.2" height="11.4" fill="#fff" stroke="#111" stroke-width="1.5"/>
<rect x="9" y="8.4" width="6" height="9.8" fill="#e82a2a"/>
<rect x="15" y="8.4" width="2.7" height="9.8" fill="#d8d8d8"/>
<path d="M11.2 8.4v9.8M13.4 8.4v9.8M15.4 8.4v9.8M9 10.8h8.7M9 13.2h8.7M9 15.6h8.7" stroke="#fff" stroke-width=".7" fill="none" opacity=".85"/>
<path d="M9 10.8h8.7" stroke="#7a1a1a" stroke-width=".5"/>
</svg>
<div class="abs tt" style="left:127px;top:223px">Descriptives</div>
<div class="abs" style="left:82px;top:253px;width:19px;height:1px;background:repeating-linear-gradient(90deg,#2f7fdc 0,#2f7fdc 1px,transparent 1px,transparent 2px)"></div>
<svg class="abs" style="left:101px;top:244px" width="21" height="20" viewBox="0 0 21 20">
<path d="M1 6C1 2.5 3 1 6 1S9.5 2 10 4C10.5 2 12.5 1 14.5 1S19 2.5 19 6V15H1z" fill="#b9b9b9"/>
<path d="M2.5 6C2.5 3.5 4 2.5 6 2.5S9 3.5 9.3 5.5V14H2.5z" fill="#f4f4f4"/>
<path d="M10.7 5.5C11 3.5 12.5 2.5 14.5 2.5S17.5 3.5 17.5 6V14H10.7z" fill="#ececec"/>
<path d="M1 12h8v4H1z" fill="#8f8f8f"/>
<rect x="8.2" y="7.6" width="10.2" height="11.4" fill="#fff" stroke="#111" stroke-width="1.5"/>
<rect x="9" y="8.4" width="6" height="9.8" fill="#e82a2a"/>
<rect x="15" y="8.4" width="2.7" height="9.8" fill="#d8d8d8"/>
<path d="M11.2 8.4v9.8M13.4 8.4v9.8M15.4 8.4v9.8M9 10.8h8.7M9 13.2h8.7M9 15.6h8.7" stroke="#fff" stroke-width=".7" fill="none" opacity=".85"/>
<path d="M9 10.8h8.7" stroke="#7a1a1a" stroke-width=".5"/>
</svg>
<div class="abs tt" style="left:127px;top:244px">ANOVA</div>
<div class="abs syn" style="top:125px">ONEWAY salary BY jobcat</div>
<div class="abs syn" style="top:150px">  /STATISTICS DESCRIPTIVES</div>
<div class="abs syn" style="top:175px">  /MISSING ANALYSIS.</div>
<svg class="abs" style="left:270px;top:232px" width="17" height="18" viewBox="0 0 17 18"><path d="M0 5.7h7.4V.4L16.3 8.8 7.4 17.2V11.9H0z" fill="#fb0a0a"/></svg>
<div id="h1" class="abs">Oneway</div>
<div class="abs ttl" style="left:598px;top:295px;width:300px">Descriptives</div>
<div class="abs cap" style="left:305px;top:329px">Current Salary</div>
<div class="abs lb" style="left:295px;top:425px;width:90px;height:108px"></div>
<div class="abs vl" style="left:469px;top:352px;height:181px"></div>
<div class="abs vl" style="left:570px;top:352px;height:181px"></div>
<div class="abs vl" style="left:688px;top:352px;height:181px"></div>
<div class="abs vl" style="left:790px;top:352px;height:181px"></div>
<div class="abs vl" style="left:1029px;top:352px;height:181px"></div>
<div class="abs vl" style="left:1116px;top:352px;height:181px"></div>
<div class="abs vl" style="left:909px;top:396px;height:137px"></div>
<div class="abs hl2" style="left:295px;top:450px;width:910px"></div>
<div class="abs hl" style="left:295px;top:478px;width:910px"></div>
<div class="abs hl2" style="left:295px;top:505px;width:910px"></div>
<div class="abs dk" style="left:295px;top:422px;width:910px"></div>
<div class="abs dk2" style="left:295px;top:531px;width:910px"></div>
<div class="abs h" style="left:324.0px;top:401px;width:200px">N</div>
<div class="abs h" style="left:417.0px;top:401px;width:200px">Mean</div>
<div class="abs h" style="left:527.0px;top:401px;width:200px">Std. Deviation</div>
<div class="abs h" style="left:636.0px;top:401px;width:200px">Std. Error</div>
<div class="abs h" style="left:775.0px;top:356px;width:260px">95% Confidence Interval for</div>
<div class="abs h" style="left:807.0px;top:375px;width:200px">Mean</div>
<div class="abs h" style="left:747.0px;top:400px;width:200px">Lower Bound</div>
<div class="abs h" style="left:867.0px;top:400px;width:200px">Upper Bound</div>
<div class="abs h" style="left:970.0px;top:401px;width:200px">Minimum</div>
<div class="abs h" style="left:1059.0px;top:401px;width:200px">Maximum</div>
<div class="abs l" style="left:305px;top:430px">Clerical</div>
<div class="abs d" style="left:305px;top:430px;width:150px">30</div>
<div class="abs d" style="left:406px;top:430px;width:150px">$29,125.60</div>
<div class="abs d" style="left:524px;top:430px;width:150px">$10,254.928</div>
<div class="abs d" style="left:625px;top:430px;width:150px">$1,872.285</div>
<div class="abs d" style="left:744px;top:430px;width:150px">$25,296.35</div>
<div class="abs d" style="left:865px;top:430px;width:150px">$32,954.85</div>
<div class="abs d" style="left:952px;top:430px;width:150px">$10,000</div>
<div class="abs d" style="left:1042px;top:430px;width:150px">$48,093</div>
<div class="abs l" style="left:305px;top:458px">Custodial</div>
<div class="abs d" style="left:305px;top:458px;width:150px">5</div>
<div class="abs d" style="left:406px;top:458px;width:150px">$53,600.00</div>
<div class="abs d" style="left:524px;top:458px;width:150px">$3,781.534</div>
<div class="abs d" style="left:625px;top:458px;width:150px">$1,691.153</div>
<div class="abs d" style="left:744px;top:458px;width:150px">$48,904.61</div>
<div class="abs d" style="left:865px;top:458px;width:150px">$58,295.39</div>
<div class="abs d" style="left:952px;top:458px;width:150px">$50,000</div>
<div class="abs d" style="left:1042px;top:458px;width:150px">$59,000</div>
<div class="abs l" style="left:305px;top:485px">Manager</div>
<div class="abs d" style="left:305px;top:485px;width:150px">15</div>
<div class="abs d" style="left:406px;top:485px;width:150px">$94,616.47</div>
<div class="abs d" style="left:524px;top:485px;width:150px">$22,907.375</div>
<div class="abs d" style="left:625px;top:485px;width:150px">$5,914.659</div>
<div class="abs d" style="left:744px;top:485px;width:150px">$81,930.79</div>
<div class="abs d" style="left:865px;top:485px;width:150px">$107,302.15</div>
<div class="abs d" style="left:952px;top:485px;width:150px">$31,555</div>
<div class="abs d" style="left:1042px;top:485px;width:150px">$123,000</div>
<div class="abs l" style="left:305px;top:513px">Total</div>
<div class="abs d" style="left:305px;top:513px;width:150px">50</div>
<div class="abs d" style="left:406px;top:513px;width:150px">$51,220.30</div>
<div class="abs d" style="left:524px;top:513px;width:150px">$33,004.455</div>
<div class="abs d" style="left:625px;top:513px;width:150px">$4,667.535</div>
<div class="abs d" style="left:744px;top:513px;width:150px">$41,840.54</div>
<div class="abs d" style="left:865px;top:513px;width:150px">$60,600.06</div>
<div class="abs d" style="left:952px;top:513px;width:150px">$10,000</div>
<div class="abs d" style="left:1042px;top:513px;width:150px">$123,000</div>
<div class="abs" style="left:790px;top:349px;width:419px;height:192px;border:4px solid #ec1b23"></div>
<div class="abs ttl" style="left:457px;top:578px;width:300px">ANOVA</div>
<div class="abs cap" style="left:305px;top:611px">Current Salary</div>
<div class="abs lb" style="left:295px;top:681px;width:139px;height:81px"></div>
<div class="abs vl" style="left:554px;top:634px;height:128px"></div>
<div class="abs vl" style="left:638px;top:634px;height:128px"></div>
<div class="abs vl" style="left:758px;top:634px;height:128px"></div>
<div class="abs vl" style="left:842px;top:634px;height:128px"></div>
<div class="abs hl2" style="left:295px;top:706px;width:631px"></div>
<div class="abs hl" style="left:295px;top:734px;width:631px"></div>
<div class="abs dk" style="left:295px;top:678px;width:631px"></div>
<div class="abs dk2" style="left:295px;top:760px;width:631px"></div>
<div class="abs h" style="left:391.0px;top:637px;width:200px">Sum of</div>
<div class="abs h" style="left:391.0px;top:655px;width:200px">Squares</div>
<div class="abs h" style="left:494.0px;top:656px;width:200px">df</div>
<div class="abs h" style="left:595.0px;top:656px;width:200px">Mean Square</div>
<div class="abs h" style="left:696.0px;top:656px;width:200px">F</div>
<div class="abs h" style="left:780.0px;top:656px;width:200px">Sig.</div>
<div class="abs l" style="left:305px;top:687px">Between Groups</div>
<div class="abs d" style="left:390px;top:687px;width:150px">4.292E+10</div>
<div class="abs d" style="left:474px;top:687px;width:150px">2</div>
<div class="abs d" style="left:593px;top:687px;width:150px">2.146E+10</div>
<div class="abs d" style="left:677px;top:687px;width:150px">96.492</div>
<div class="abs d" style="left:761px;top:687px;width:150px">.000</div>
<div class="abs l" style="left:305px;top:714px">Within Groups</div>
<div class="abs d" style="left:390px;top:714px;width:150px">1.045E+10</div>
<div class="abs d" style="left:474px;top:714px;width:150px">47</div>
<div class="abs d" style="left:593px;top:714px;width:150px">222413032.1</div>
<div class="abs l" style="left:305px;top:742px">Total</div>
<div class="abs d" style="left:390px;top:742px;width:150px">5.338E+10</div>
<div class="abs d" style="left:474px;top:742px;width:150px">49</div>
</body>
</html>
